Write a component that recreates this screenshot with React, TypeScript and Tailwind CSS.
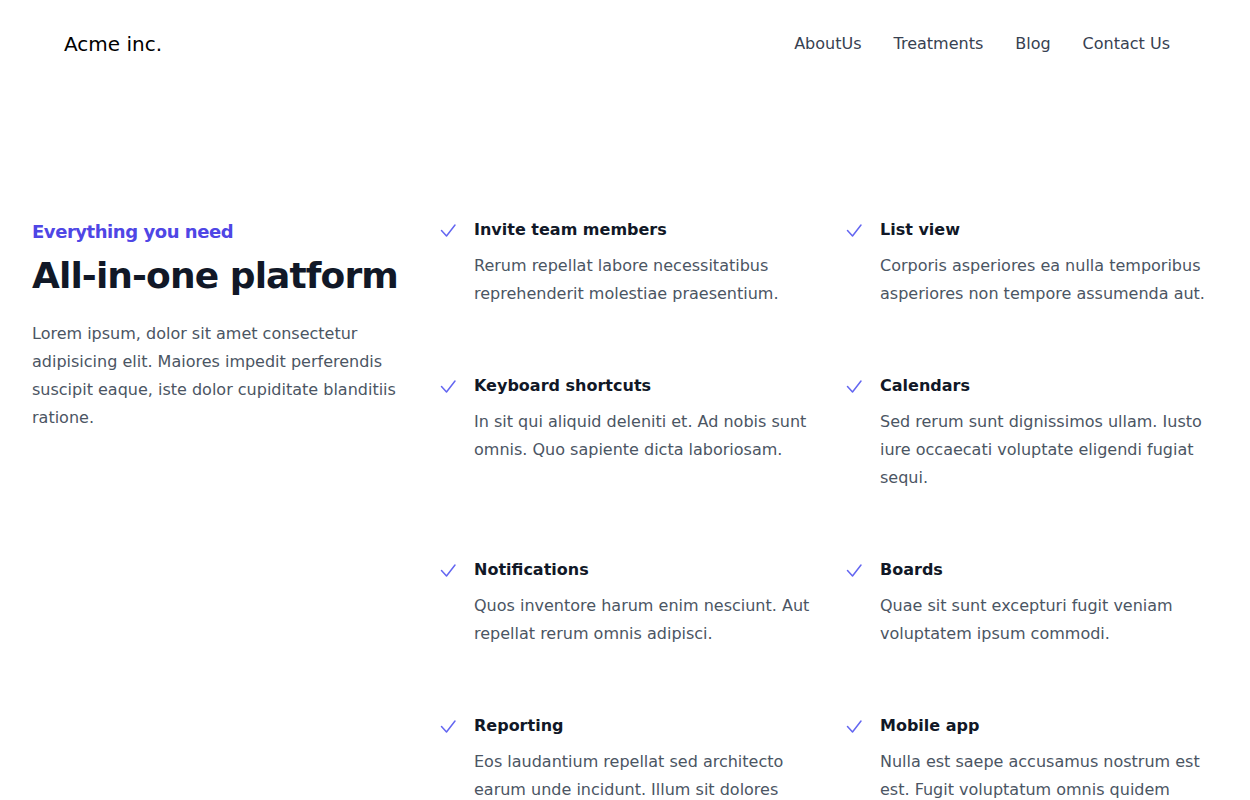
const features = [
  {
    name: "Invite team members",
    description:
      "Rerum repellat labore necessitatibus reprehenderit molestiae praesentium.",
  },
  {
    name: "List view",
    description:
      "Corporis asperiores ea nulla temporibus asperiores non tempore assumenda aut.",
  },
  {
    name: "Keyboard shortcuts",
    description:
      "In sit qui aliquid deleniti et. Ad nobis sunt omnis. Quo sapiente dicta laboriosam.",
  },
  {
    name: "Calendars",
    description:
      "Sed rerum sunt dignissimos ullam. Iusto iure occaecati voluptate eligendi fugiat sequi.",
  },
  {
    name: "Notifications",
    description:
      "Quos inventore harum enim nesciunt. Aut repellat rerum omnis adipisci.",
  },
  {
    name: "Boards",
    description: "Quae sit sunt excepturi fugit veniam voluptatem ipsum commodi.",
  },
  {
    name: "Reporting",
    description:
      "Eos laudantium repellat sed architecto earum unde incidunt. Illum sit dolores voluptatem.",
  },
  {
    name: "Mobile app",
    description:
      "Nulla est saepe accusamus nostrum est est. Fugit voluptatum omnis quidem voluptatem.",
  },
];

function CheckIcon() {
  return (
    <svg
      viewBox="0 0 20 20"
      fill="none"
      stroke="currentColor"
      strokeWidth={1.5}
      strokeLinecap="round"
      strokeLinejoin="round"
      className="absolute left-0 top-1 h-5 w-5 text-[#6366f1]"
    >
      <path d="M3.5 10.5 8.5 16 17 5" />
    </svg>
  );
}

export default function App() {
  return (
    <div
      className="min-h-screen bg-white"
      style={{ fontFamily: '"DejaVu Sans", sans-serif' }}
    >
      {/* Nav */}
      <nav className="flex h-[88px] items-center justify-between pl-16 pr-20">
        <span className="text-xl text-black">Acme inc.</span>
        <div className="flex items-center gap-8 text-base text-[#374151]">
          <a href="#">AboutUs</a>
          <a href="#">Treatments</a>
          <a href="#">Blog</a>
          <a href="#">Contact Us</a>
        </div>
      </nav>

      {/* Features */}
      <section className="pt-32 pb-24">
        <div className="mx-auto max-w-7xl px-8">
          <div className="grid grid-cols-3 gap-x-8">
            <div className="mt-[2px]">
              <h2 className="text-lg/7 font-bold tracking-tight text-[#4f46e5]">
                Everything you need
              </h2>
              <p className="mt-[10px] text-4xl font-bold tracking-tight text-[#111827]">
                All-in-one platform
              </p>
              <p className="mt-6 text-base/7 text-[#4b5563]">
                Lorem ipsum, dolor sit amet consectetur adipisicing elit.
                Maiores impedit perferendis suscipit eaque, iste dolor
                cupiditate blanditiis ratione.
              </p>
            </div>
            <dl className="col-span-2 grid grid-cols-2 gap-x-8 gap-y-16 text-base/7 text-[#4b5563]">
              {features.map((feature) => (
                <div key={feature.name} className="relative pl-9">
                  <dt className="font-bold text-[#111827]">
                    <CheckIcon />
                    {feature.name}
                  </dt>
                  <dd className="mt-2">{feature.description}</dd>
                </div>
              ))}
            </dl>
          </div>
        </div>
      </section>
    </div>
  );
}
